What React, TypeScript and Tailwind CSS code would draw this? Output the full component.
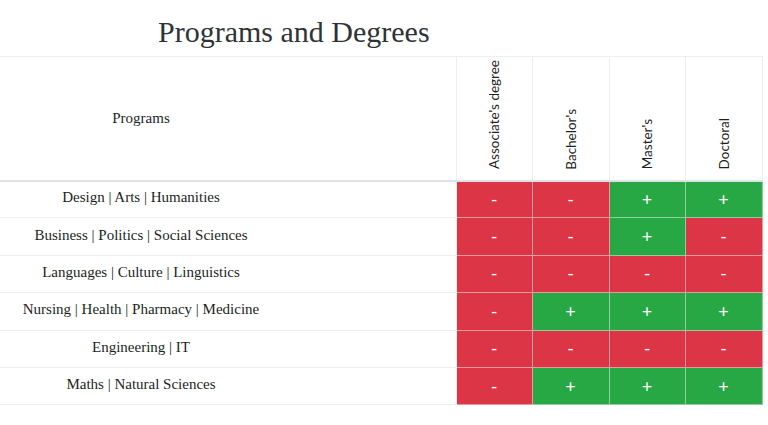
const degrees = ["Associate's degree", "Bachelor's", "Master's", 'Doctoral'];

const programs: { name: string; offers: boolean[] }[] = [
  { name: 'Design | Arts | Humanities', offers: [false, false, true, true] },
  { name: 'Business | Politics | Social Sciences', offers: [false, false, true, false] },
  { name: 'Languages | Culture | Linguistics', offers: [false, false, false, false] },
  { name: 'Nursing | Health | Pharmacy | Medicine', offers: [false, true, true, true] },
  { name: 'Engineering | IT', offers: [false, false, false, false] },
  { name: 'Maths | Natural Sciences', offers: [false, true, true, true] },
];

export default function App() {
  return (
    <div className="w-[768px] h-[425px] bg-white overflow-hidden">
      {/* Title */}
      <div className="h-[56px] pl-[158px] pt-[14px]">
        <h1 className="text-[30px] leading-[36px] text-[#2f3337] [font-family:'Liberation_Serif',serif]">
          Programs and Degrees
        </h1>
      </div>

      <table className="w-[762px] border-collapse table-fixed">
        <colgroup>
          <col className="w-[456px]" />
          <col className="w-[76px]" />
          <col className="w-[77px]" />
          <col className="w-[76px]" />
          <col className="w-[77px]" />
        </colgroup>
        <thead>
          <tr className="h-[124px]">
            <th className="border border-[#eceef0] border-b-2 border-b-[#dee2e6] border-l-0 p-0 font-normal align-middle">
              <div className="w-[282px] text-center text-[15px] text-[#212529] [font-family:'Liberation_Serif',serif]">
                Programs
              </div>
            </th>
            {degrees.map((d) => (
              <th
                key={d}
                className="border border-[#eceef0] border-b-2 border-b-[#dee2e6] p-0 pb-[10px] align-bottom font-normal"
              >
                <div className="flex justify-center">
                  <span className="[writing-mode:vertical-rl] rotate-180 text-[13.5px] leading-[18px] text-[#1c1f23] [font-family:Lato,sans-serif]">
                    {d}
                  </span>
                </div>
              </th>
            ))}
          </tr>
        </thead>
        <tbody>
          {programs.map((p) => (
            <tr key={p.name} className="h-[37.4px]">
              <td className="border border-[#eceef0] border-l-0 p-0 pb-[4px] align-middle">
                <div className="w-[282px] text-center text-[15px] leading-[20px] text-[#1c1f23] [font-family:'Liberation_Serif',serif]">
                  {p.name}
                </div>
              </td>
              {p.offers.map((ok, i) => (
                <td
                  key={i}
                  className={`border p-0 text-center align-middle text-white text-[18px] [font-family:Lato,sans-serif] ${
                    ok ? 'bg-[#28a745] border-[#8fcf9d]' : 'bg-[#dc3545] border-[#eb99a1]'
                  }`}
                >
                  {ok ? '+' : '-'}
                </td>
              ))}
            </tr>
          ))}
        </tbody>
      </table>
    </div>
  );
}
